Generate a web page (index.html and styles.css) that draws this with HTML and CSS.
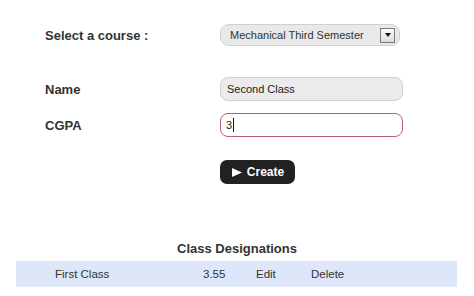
FILE: index.html
```html
<!DOCTYPE html>
<html>
<head>
<meta charset="utf-8">
<link rel="stylesheet" href="styles.css">
</head>
<body>
<div class="form">
  <div class="row row-course">
    <label class="label">Select a course :</label>
    <div class="select">
      <span class="select-text">Mechanical Third Semester</span>
      <span class="select-btn"><svg width="6" height="4" viewBox="0 0 6 4"><path d="M0 0H6L3 4Z" fill="#111"/></svg></span>
    </div>
  </div>
  <div class="row row-name">
    <label class="label">Name</label>
    <div class="input input-filled">Second Class</div>
  </div>
  <div class="row row-cgpa">
    <label class="label">CGPA</label>
    <div class="input input-focus">3<span class="caret"></span></div>
  </div>
  <div class="row row-btn">
    <span class="spacer"></span>
    <button class="btn"><svg class="tri" width="10" height="9" viewBox="0 0 10 9"><path d="M0 0L10 4.5L0 9Z" fill="#fff"/></svg>Create</button>
  </div>
</div>
<h3 class="heading">Class Designations</h3>
<div class="table-row">
  <span class="cell c-name">First Class</span>
  <span class="cell c-cgpa">3.55</span>
  <span class="cell c-edit">Edit</span>
  <span class="cell c-del">Delete</span>
</div>
</body>
</html>
```

FILE: styles.css
```css
html, body {
  margin: 0;
  padding: 0;
  background: #fff;
}
body {
  font-family: "Liberation Sans", Arial, sans-serif;
  color: #333;
  width: 474px;
  height: 296px;
  overflow: hidden;
}
.form {
  padding: 24px 0 0 45px;
  display: flex;
  flex-direction: column;
}
.row {
  display: grid;
  grid-template-columns: 175px auto;
  align-items: center;
}
.row-name { margin-top: 31px; }
.row-cgpa { margin-top: 12px; }
.row-btn { margin-top: 23px; }
.label {
  font-weight: bold;
  font-size: 13px;
  color: #333;
}
.select {
  box-sizing: border-box;
  width: 180px;
  height: 22px;
  background: #e9e9e9;
  border: 1px solid #cfcfcf;
  border-radius: 9px;
  display: flex;
  align-items: center;
  justify-content: space-between;
  padding: 0 4px 0 9px;
  font-size: 11px;
  color: #333;
}
.select-btn {
  box-sizing: border-box;
  width: 15px;
  height: 15px;
  border: 1px solid #7a7a7a;
  background: linear-gradient(#fbfbfb, #dcdcdc);
  display: flex;
  align-items: center;
  justify-content: center;
}
.input {
  box-sizing: border-box;
  width: 183px;
  height: 24px;
  border-radius: 8px;
  font-size: 11px;
  display: flex;
  align-items: center;
  padding-left: 6px;
  color: #222;
}
.input-filled {
  background: #ebebeb;
  border: 1px solid #d0d0d0;
}
.input-focus {
  background: #fff;
  border: 1.5px solid #b9606e;
  padding-left: 5px;
}
.caret {
  display: inline-block;
  width: 1px;
  height: 14px;
  background: #111;
  margin-left: 1px;
}
.btn {
  box-sizing: border-box;
  width: 75px;
  height: 24px;
  background: #222;
  color: #fff;
  border: none;
  border-radius: 7px;
  font-family: "Liberation Sans", Arial, sans-serif;
  font-weight: bold;
  font-size: 12px;
  padding: 0 0 0 1px;
  display: flex;
  align-items: center;
  justify-content: center;
  gap: 5px;
}
.heading {
  margin: 57px 0 0 0;
  text-align: center;
  font-size: 13px;
  font-weight: bold;
  color: #333;
  line-height: 16px;
}
.table-row {
  margin: 4px 0 0 16px;
  width: 441px;
  height: 26px;
  background: #dde7f9;
  border-bottom: 1px solid #e8eef8;
  display: grid;
  grid-template-columns: 39px 148px 53px 55px auto;
  align-items: center;
  font-size: 11.5px;
  color: #333;
  box-sizing: border-box;
}
.c-name { grid-column: 2; }
.c-cgpa { grid-column: 3; }
.c-edit { grid-column: 4; }
.c-del { grid-column: 5; }
```
